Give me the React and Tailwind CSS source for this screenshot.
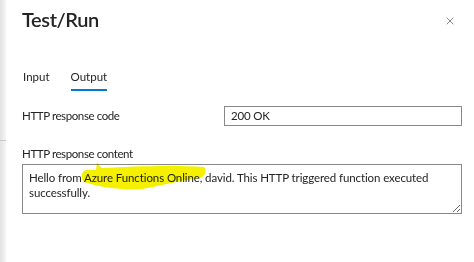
import { X } from 'lucide-react';

const font = { fontFamily: 'Lato, "Noto Sans", sans-serif' };

export default function App() {
  return (
    <div className="flex h-[262px] w-[474px] overflow-hidden bg-white text-[#242424]" style={font}>
      {/* panel shadow on the left */}
      <div className="relative w-[6px] shrink-0 bg-gradient-to-r from-[#e2e2e2] to-[#f6f6f6]">
        <div className="absolute left-0 top-[140px] h-px w-[6px] bg-[#c8c8c8]" />
      </div>

      <div className="flex flex-1 flex-col pl-[16px] pr-[12px]">
        <div className="flex items-start justify-between pt-[5px]">
          <h1 className="text-[20px] font-semibold leading-[28px] tracking-[-0.4px]">Test/Run</h1>
          <button className="mr-[6px] mt-[10px] text-[#605e5c]">
            <X className="h-[12px] w-[12px]" strokeWidth={1.5} />
          </button>
        </div>

        <div className="mt-[34px] flex gap-[21px] pl-px text-[11.5px]">
          <div className="flex flex-col">
            <span className="leading-[20px]">Input</span>
            <span className="mt-[2px] h-[2px]" />
          </div>
          <div className="flex flex-col">
            <span className="leading-[20px]">Output</span>
            <span className="mt-[2px] h-[2px] bg-[#0078d4]" />
          </div>
        </div>

        <div className="mt-[15px] flex items-center text-[11.5px] tracking-[-0.4px]">
          <span className="w-[202px] leading-[20px]">HTTP response code</span>
          <div className="flex h-[20px] flex-1 items-center border border-[#8a8886] px-[6px] leading-[18px] tracking-[-0.2px]">200 OK</div>
        </div>

        <div className="mt-[18px] text-[11.5px] leading-[20px] tracking-[-0.4px]">HTTP response content</div>

        <div className="relative">
          <textarea
            readOnly
            defaultValue="Hello from Azure Functions Online, david. This HTTP triggered function executed successfully."
            className="block h-[50px] w-full resize border border-[#8a8886] px-[6px] pt-[5px] text-[11.5px] leading-[15px] tracking-[-0.1px] text-[#242424] outline-none"
            style={font}
          />
          <svg
            className="pointer-events-none absolute left-0 top-[-2px] mix-blend-multiply"
            width="220"
            height="32"
            viewBox="0 0 220 32"
          >
            <path
              d="M61 10 C63 7 70 8 74 8 L75 0 C77 3 78 5 80 6 C112 4 155 3 182 5 C185 8 184 14 178 16 C155 19 138 24 120 27 C100 28 80 26 62 20 C59 17 59 13 61 10 Z"
              fill="#f5f000"
            />
          </svg>
        </div>
      </div>
    </div>
  );
}
